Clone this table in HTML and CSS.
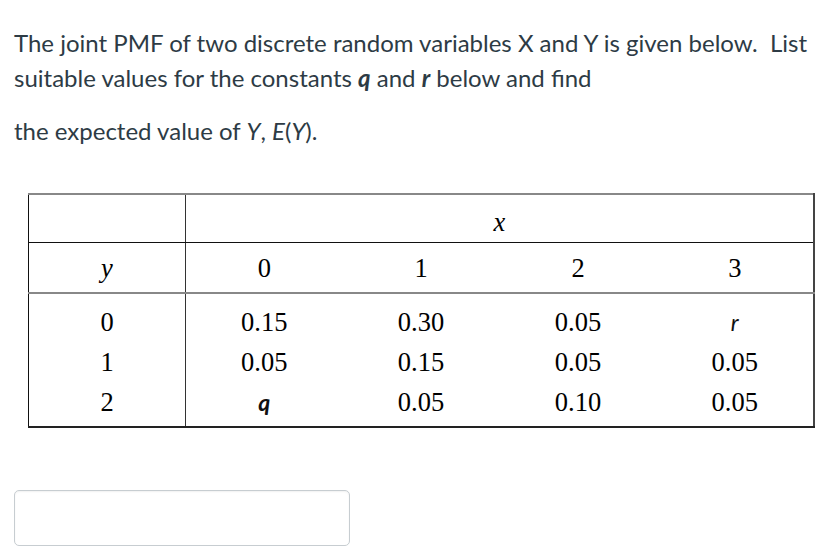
FILE: index.html
```html
<!DOCTYPE html>
<html>
<head>
<meta charset="utf-8">
<link rel="stylesheet" href="styles.css">
</head>
<body>
<div class="question">
  <p class="text">The joint PMF of two discrete random variables X and Y is given below.&nbsp; List suitable values for the constants <b><i>q</i></b> and <b><i>r</i></b> below and find</p>
  <p class="text">the expected value of <i>Y</i>, <i>E</i>(<i>Y</i>).</p>
  <table class="pmf">
    <colgroup>
      <col class="c"><col class="c"><col class="c"><col class="c"><col>
    </colgroup>
    <tr class="r-head">
      <td class="first"></td>
      <td colspan="4" class="var">x</td>
    </tr>
    <tr class="r-x">
      <td class="first var">y</td>
      <td>0</td><td>1</td><td>2</td><td>3</td>
    </tr>
    <tr class="r-d r-top">
      <td class="first">0</td>
      <td>0.15</td><td>0.30</td><td>0.05</td><td><span class="const">r</span></td>
    </tr>
    <tr class="r-d">
      <td class="first">1</td>
      <td>0.05</td><td>0.15</td><td>0.05</td><td>0.05</td>
    </tr>
    <tr class="r-d r-bot">
      <td class="first">2</td>
      <td><span class="const q">q</span></td><td>0.05</td><td>0.10</td><td>0.05</td>
    </tr>
  </table>
  <div class="answer"></div>
</div>
</body>
</html>
```

FILE: styles.css
```css
html, body {
  margin: 0;
  padding: 0;
  background: #ffffff;
}

.question {
  padding: 25px 14px 0 14px;
  font-family: Lato, "Liberation Sans", sans-serif;
  color: #2d3b45;
  font-size: 24px;
  line-height: 35.3px;
}

.text {
  margin: 0 0 17.6px 0;
}

.pmf {
  margin: 45px 0 0 14px;
  width: 787px;
  table-layout: fixed;
  border-collapse: collapse;
  font-family: "Liberation Serif", "Times New Roman", serif;
  font-size: 26.5px;
  color: #000;
  border-left: 1px solid #111;
  border-bottom: 2px solid #222;
  border-right: 2px solid #444;
  border-top: 2px solid #888;
}

.pmf col.c {
  width: 157px;
}

.pmf td {
  text-align: center;
  padding: 0;
  line-height: 30px;
}

.pmf td.first {
  border-right: 1px solid #333;
}

.r-head td {
  height: 41px;
  padding-top: 6px;
  border-bottom: 1px solid #111;
}

.r-x td {
  height: 49px;
  border-bottom: 2px solid #888;
}

.r-d td {
  height: 40px;
  line-height: 40px;
}

.r-top td {
  padding-top: 8px;
}

.r-bot td {
  padding-bottom: 4px;
}

.var {
  font-style: italic;
}

.const {
  font-family: Lato, "Open Sans", sans-serif;
  font-style: italic;
  font-size: 23px;
  color: #111;
}

.const.q {
  font-weight: 700;
}

.answer {
  margin-top: 62px;
  width: 334px;
  height: 54px;
  border: 1px solid #c7cdd1;
  border-radius: 5px;
  box-shadow: inset 0 1px 2px rgba(0, 0, 0, 0.06);
  background: #fff;
}
```
